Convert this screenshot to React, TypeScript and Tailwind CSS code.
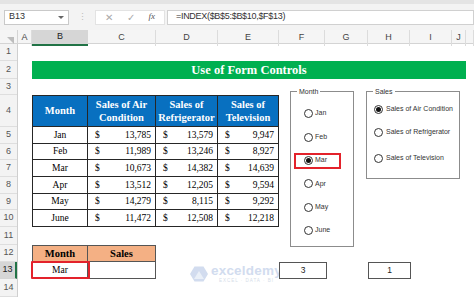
const cols = ["", "A", "B", "C", "D", "E", "F", "G", "H", "I", "J", ""];

const sales = [
  ["Jan", "13,785", "13,579", "9,947"],
  ["Feb", "11,989", "13,246", "8,927"],
  ["Mar", "10,673", "14,382", "14,639"],
  ["Apr", "13,512", "12,205", "9,594"],
  ["May", "14,279", "8,115", "9,292"],
  ["June", "11,472", "12,508", "12,218"],
];

const months = ["Jan", "Feb", "Mar", "Apr", "May", "June"];

function Radio({ checked }: { checked?: boolean }) {
  return (
    <span className="w-[9px] h-[9px] rounded-full border border-[#333] bg-white flex items-center justify-center shrink-0">
      {checked && <span className="w-[5px] h-[5px] rounded-full bg-[#111]" />}
    </span>
  );
}

function MoneyCell({ value }: { value: string }) {
  return (
    <div className="border-r border-b border-[#262626] flex items-center justify-between pl-[7px] pr-[4px]">
      <span>$</span>
      <span>{value}</span>
    </div>
  );
}

export default function App() {
  return (
    <div className="w-[474px] h-[297px] overflow-hidden bg-white relative font-[Liberation_Sans,Arial,sans-serif]">
      {/* formula bar */}
      <div className="h-[30px] bg-[#f3f3f3] border-t-[4px] border-[#e4e4e4] flex items-center text-[#333]">
        <div className="ml-[4px] w-[65px] h-[15px] bg-white border border-[#c9c9c9] flex items-center justify-between pl-[4px] pr-[4px] text-[9px]">
          <span>B13</span>
          <span className="w-0 h-0 border-l-[3px] border-r-[3px] border-t-[3px] border-l-transparent border-r-transparent border-t-[#666]" />
        </div>
        <span className="ml-[9px] text-[9px] text-[#bbb] leading-none">⋮</span>
        <div className="ml-[8px] w-[70px] h-[15px] bg-white border border-[#e3e3e3] flex items-center justify-around px-[2px] text-[10px]">
          <span className="text-[#aaa]">✕</span>
          <span className="text-[#aaa]">✓</span>
          <span className="italic font-[Liberation_Serif,serif] text-[#555] text-[9px]">fx</span>
        </div>
        <div className="ml-[2px] flex-1 h-[15px] bg-white border border-[#d0d0d0] flex items-center pl-[8px] text-[9px] tracking-[-0.3px]">
          =INDEX($B$5:$B$10,$F$13)
        </div>
      </div>

      {/* column headers */}
      <div className="h-[14px] grid grid-cols-[18px_14px_56px_68px_62px_61px_46px_43px_42px_42px_14px_1fr] bg-[#f5f5f5] border-b border-[#d4d4d4] text-[9px] text-[#444]">
        {cols.map((c, i) =>
          i === 0 ? (
            <div key={i} className="flex items-end justify-end pr-[3px] pb-[2px] border-r border-[#d4d4d4]">
              <span className="w-0 h-0 border-l-[7px] border-t-[7px] border-l-transparent border-t-transparent border-r-0 border-b-[0px] relative">
                <span className="absolute -left-[7px] -top-[7px] w-0 h-0 border-l-[7px] border-t-[7px] border-l-transparent border-t-[#bdbdbd]" />
              </span>
            </div>
          ) : c === "B" ? (
            <div key={i} className="flex items-center justify-center bg-[#d6d6d6] border-b-2 border-[#217346] text-[#222]">
              {c}
            </div>
          ) : (
            <div key={i} className="flex items-center justify-center border-r border-[#dcdcdc]">
              {c}
            </div>
          )
        )}
      </div>

      {/* sheet */}
      <div className="relative grid grid-cols-[18px_14px_56px_68px_62px_61px_46px_43px_42px_42px_14px_1fr] grid-rows-[17px_18px_16px_32px_17px_16px_17px_17px_16px_17px_18px_17px_17px_18px] font-[Liberation_Serif,serif] text-[9.5px] text-black">
        {/* row numbers */}
        <div className="col-start-1 row-start-1 row-span-14 grid grid-rows-subgrid bg-[#f3f3f3] border-r border-[#cfcfcf] font-[Liberation_Sans,Arial,sans-serif] text-[9px] text-[#555]">
          {Array.from({ length: 14 }, (_, i) =>
            i === 12 ? (
              <div key={i} className="flex items-center justify-center bg-[#d6d6d6] border-r-2 border-[#217346] border-b border-b-[#d4d4d4] text-[#222]">
                {i + 1}
              </div>
            ) : (
              <div key={i} className="flex items-center justify-center border-b border-[#dedede]">
                {i + 1}
              </div>
            )
          )}
        </div>

        {/* title banner */}
        <div className="col-start-3 col-end-12 row-start-2 bg-[#00b050] flex items-center justify-center text-white font-bold text-[12.5px]">
          Use of Form Controls
        </div>

        {/* sales table */}
        <div className="col-start-3 col-span-4 row-start-4 row-span-7 grid grid-cols-subgrid grid-rows-subgrid border-l border-t border-[#262626]">
          <div className="bg-[#0870c0] border-r border-b border-[#262626] text-white font-bold text-[10.5px] flex items-center justify-center">
            Month
          </div>
          <div className="bg-[#0870c0] border-r border-b border-[#262626] text-white font-bold text-[10.5px] leading-[13px] flex items-center justify-center text-center">
            Sales of Air
            <br />
            Condition
          </div>
          <div className="bg-[#0870c0] border-r border-b border-[#262626] text-white font-bold text-[10.5px] leading-[13px] flex items-center justify-center text-center">
            Sales of
            <br />
            Refrigerator
          </div>
          <div className="bg-[#0870c0] border-r border-b border-[#262626] text-white font-bold text-[10.5px] leading-[13px] flex items-center justify-center text-center">
            Sales of
            <br />
            Television
          </div>
          {sales.map((r) => (
            <div key={r[0]} className="contents">
              <div className="border-r border-b border-[#262626] flex items-center justify-center">{r[0]}</div>
              <MoneyCell value={r[1]} />
              <MoneyCell value={r[2]} />
              <MoneyCell value={r[3]} />
            </div>
          ))}
        </div>

        {/* lookup table */}
        <div className="col-start-3 col-span-2 row-start-12 row-span-2 grid grid-cols-subgrid grid-rows-subgrid border-l border-t border-[#555]">
          <div className="bg-[#f4b084] border-r border-b border-[#555] font-bold text-[10.5px] flex items-center justify-center">Month</div>
          <div className="bg-[#f4b084] border-r border-b border-[#555] font-bold text-[10.5px] flex items-center justify-center">Sales</div>
          <div className="relative border-r border-b border-[#555] flex items-center justify-center">
            Mar
            <span className="absolute -left-[2px] -top-[1px] w-[59px] h-[18px] border-2 border-[#e3222b] rounded-[1px]" />
          </div>
          <div className="border-r border-b border-[#555]" />
        </div>

        {/* watermark */}
        <div className="absolute left-[190px] top-[220px] flex items-center gap-[3px] opacity-75 font-[Liberation_Sans,Arial,sans-serif]">
          <svg width="18" height="16" viewBox="0 0 18 16">
            <polygon points="4.5,0.5 13.5,0.5 18,8 13.5,15.5 4.5,15.5 0,8" fill="#c3d1ea" />
            <polygon points="4,13 9,5 14,13" fill="#e4ebf6" />
          </svg>
          <div className="flex flex-col items-center leading-none">
            <span className="text-[13.5px] font-bold text-[#c3d1ea] tracking-[0.2px]">exceldemy</span>
            <span className="text-[4.5px] text-[#c8d2e2] tracking-[1px] mt-[1px]">EXCEL · DATA · BI</span>
          </div>
        </div>

        {/* month option group */}
        <div className="absolute left-[290px] top-[47px] w-[64px] h-[156px] border border-[#8c8c8c] font-[Liberation_Sans,Arial,sans-serif] text-[7px] text-[#333]">
          <span className="absolute left-[6px] -top-[5px] bg-white px-[2px] leading-[9px]">Month</span>
          <div className="flex flex-col pt-[10px]">
            {months.map((m) => (
              <div key={m} className="relative h-[23.4px] flex items-center gap-[2px] pl-[13px]">
                <Radio checked={m === "Mar"} />
                <span>{m}</span>
                {m === "Mar" && (
                  <span className="absolute left-[3px] top-[4px] w-[47px] h-[16px] border-2 border-[#e3222b]" />
                )}
              </div>
            ))}
          </div>
        </div>

        {/* sales option group */}
        <div className="absolute left-[366px] top-[47px] w-[94px] h-[88px] border border-[#8c8c8c] font-[Liberation_Sans,Arial,sans-serif] text-[7px] text-[#333]">
          <span className="absolute left-[6px] -top-[5px] bg-white px-[2px] leading-[9px]">Sales</span>
          <div className="flex flex-col pl-[7px] pt-[11px]">
            <div className="h-[12px] flex items-center gap-[3px]">
              <Radio checked />
              <span>Sales of Air Condition</span>
            </div>
            <div className="h-[12px] mt-[11px] flex items-center gap-[3px]">
              <Radio />
              <span>Sales of Refrigerator</span>
            </div>
            <div className="h-[12px] mt-[14px] flex items-center gap-[3px]">
              <Radio />
              <span>Sales of Television</span>
            </div>
          </div>
        </div>

        {/* linked text boxes */}
        <div className="absolute left-[279px] top-[218px] w-[48px] h-[17px] bg-white border border-[#555] flex items-center justify-center font-[Liberation_Sans,Arial,sans-serif] text-[8.5px] text-[#222]">
          3
        </div>
        <div className="absolute left-[368px] top-[218px] w-[43px] h-[17px] bg-white border border-[#555] flex items-center justify-center font-[Liberation_Sans,Arial,sans-serif] text-[8.5px] text-[#222]">
          1
        </div>
      </div>
    </div>
  );
}
